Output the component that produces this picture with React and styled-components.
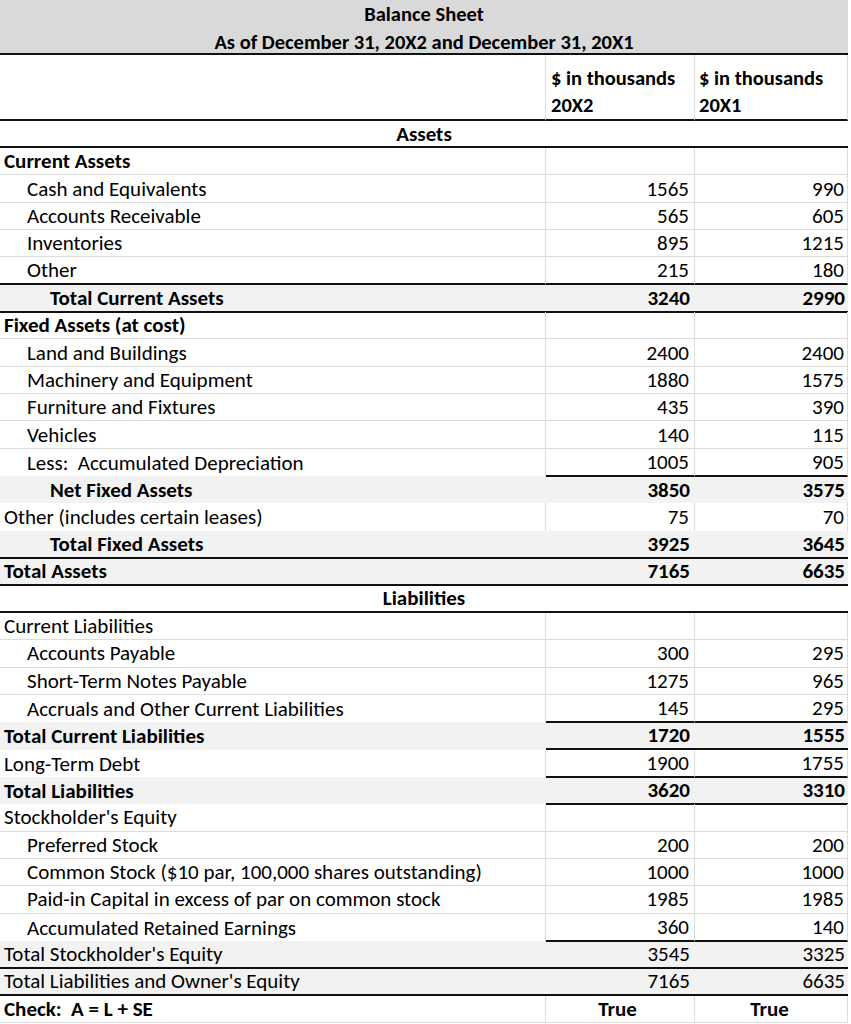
import React from "react"
import styled, { createGlobalStyle } from "styled-components"

const GlobalStyle = createGlobalStyle`
    body {
        margin: 0;
        background: #fff;
    }
`;

const GRID = "#dcdcdc";
const RULE = "2px solid #111";

const Sheet = styled.div`
    width: 848px;
    font-family: Carlito, Lato, "Liberation Sans", sans-serif;
    font-size: 21px;
    color: #000;
`;

const TitleRow = styled.div`
    box-sizing: border-box;
    height: ${p => p.$h}px;
    line-height: 27px;
    padding-top: ${p => (p.$rule ? 2 : 1)}px;
    background: #d9d9d9;
    text-align: center;
    font-weight: 700;
    font-size: 20.5px;
    border-bottom: ${p => (p.$rule ? RULE : "none")};
`;

const Row = styled.div`
    display: grid;
    grid-template-columns: 546px 149px 153px;
    height: ${p => p.$h}px;
    background: ${p => (p.$shade ? "#f2f2f2" : "#fff")};
`;

const Cell = styled.div`
    box-sizing: border-box;
    display: flex;
    align-items: ${p => p.$valign || "center"};
    justify-content: ${p => p.$align || "flex-start"};
    padding: ${p => p.$pad || "0 5px 0 4px"};
    padding-left: ${p => (p.$indent !== undefined ? p.$indent : 4)}px;
    font-weight: ${p => (p.$bold ? 700 : 400)};
    white-space: pre;
    border-right: ${p => (p.$vline ? `1px solid ${GRID}` : "none")};
    border-bottom: ${p => p.$bottom || "none"};
`;

const HeadStack = styled.div`
    display: flex;
    flex-direction: column;
    line-height: 27px;
    font-weight: 700;
    font-size: 20.5px;
    padding-bottom: 0;
`;

const SectionRow = styled.div`
    box-sizing: border-box;
    height: ${p => p.$h}px;
    display: flex;
    align-items: center;
    justify-content: center;
    font-weight: 700;
    border-bottom: ${RULE};
`;

const ROW_H = 27.35;
const indents = [4, 27, 50];

const rows = [
    { label: "Current Assets", bold: true },
    { label: "Cash and Equivalents", indent: 1, a: 1565, b: 990 },
    { label: "Accounts Receivable", indent: 1, a: 565, b: 605 },
    { label: "Inventories", indent: 1, a: 895, b: 1215 },
    { label: "Other", indent: 1, a: 215, b: 180, rule: "full" },
    { label: "Total Current Assets", indent: 2, bold: true, shade: true, a: 3240, b: 2990, rule: "full" },
    { label: "Fixed Assets (at cost)", bold: true },
    { label: "Land and Buildings", indent: 1, a: 2400, b: 2400 },
    { label: "Machinery and Equipment", indent: 1, a: 1880, b: 1575 },
    { label: "Furniture and Fixtures", indent: 1, a: 435, b: 390 },
    { label: "Vehicles", indent: 1, a: 140, b: 115 },
    { label: "Less:  Accumulated Depreciation", indent: 1, a: 1005, b: 905, rule: "num" },
    { label: "Net Fixed Assets", indent: 2, bold: true, shade: true, a: 3850, b: 3575 },
    { label: "Other (includes certain leases)", a: 75, b: 70 },
    { label: "Total Fixed Assets", indent: 2, bold: true, shade: true, a: 3925, b: 3645, rule: "full" },
    { label: "Total Assets", bold: true, shade: true, a: 7165, b: 6635, rule: "full" },
    { section: "Liabilities" },
    { label: "Current Liabilities" },
    { label: "Accounts Payable", indent: 1, a: 300, b: 295 },
    { label: "Short-Term Notes Payable", indent: 1, a: 1275, b: 965 },
    { label: "Accruals and Other Current Liabilities", indent: 1, a: 145, b: 295, rule: "num" },
    { label: "Total Current Liabilities", bold: true, shade: true, a: 1720, b: 1555, rule: "num" },
    { label: "Long-Term Debt", a: 1900, b: 1755, rule: "num" },
    { label: "Total Liabilities", bold: true, shade: true, a: 3620, b: 3310, rule: "num" },
    { label: "Stockholder's Equity" },
    { label: "Preferred Stock", indent: 1, a: 200, b: 200 },
    { label: "Common Stock ($10 par, 100,000 shares outstanding)", indent: 1, a: 1000, b: 1000 },
    { label: "Paid-in Capital in excess of par on common stock", indent: 1, a: 1985, b: 1985 },
    { label: "Accumulated Retained Earnings", indent: 1, a: 360, b: 140, rule: "num" },
    { label: "Total Stockholder's Equity", shade: true, a: 3545, b: 3325, rule: "full" },
    { label: "Total Liabilities and Owner's Equity", shade: true, a: 7165, b: 6635, rule: "full" },
    { label: "Check:  A = L + SE", bold: true, a: "True", b: "True", center: true, numBold: true },
];

const DataRow = ({ row, next }) => {
    const grid = row.shade || (next && next.shade) ? "none" : `1px solid ${GRID}`;
    const labelBottom = row.rule === "full" ? RULE : grid;
    const numBottom = row.rule ? RULE : grid;
    const numAlign = row.center ? "center" : "flex-end";
    const numBold = row.numBold || row.bold;

    return (
        <Row $h={ROW_H} $shade={row.shade}>
            <Cell
                $indent={indents[row.indent || 0]}
                $bold={row.bold}
                $vline={!row.shade}
                $bottom={labelBottom}
            >
                {row.label}
            </Cell>
            <Cell
                $align={numAlign}
                $pad="0 5px 0 0"
                $indent={0}
                $bold={numBold}
                $vline={!row.shade}
                $bottom={numBottom}
            >
                {row.a}
            </Cell>
            <Cell
                $align={numAlign}
                $pad="0 3px 0 0"
                $indent={0}
                $bold={numBold}
                $vline={!row.shade}
                $bottom={numBottom}
            >
                {row.b}
            </Cell>
        </Row>
    )
};

const App = () => {
    return (
        <Sheet>
            <GlobalStyle />
            <TitleRow $h={27}>Balance Sheet</TitleRow>
            <TitleRow $h={28} $rule>As of December 31, 20X2 and December 31, 20X1</TitleRow>
            <Row $h={66}>
                <Cell $vline $bottom={RULE} />
                <Cell $vline $bottom={RULE} $valign="flex-end" $indent={5}>
                    <HeadStack>
                        <span>$ in thousands</span>
                        <span>20X2</span>
                    </HeadStack>
                </Cell>
                <Cell $vline $bottom={RULE} $valign="flex-end" $indent={4}>
                    <HeadStack>
                        <span>$ in thousands</span>
                        <span>20X1</span>
                    </HeadStack>
                </Cell>
            </Row>
            <SectionRow $h={27}>Assets</SectionRow>
            {rows.map((row, i) =>
                row.section ? (
                    <SectionRow key={row.section} $h={ROW_H}>{row.section}</SectionRow>
                ) : (
                    <DataRow key={row.label} row={row} next={rows[i + 1]} />
                )
            )}
        </Sheet>
    )
};

export default App;
